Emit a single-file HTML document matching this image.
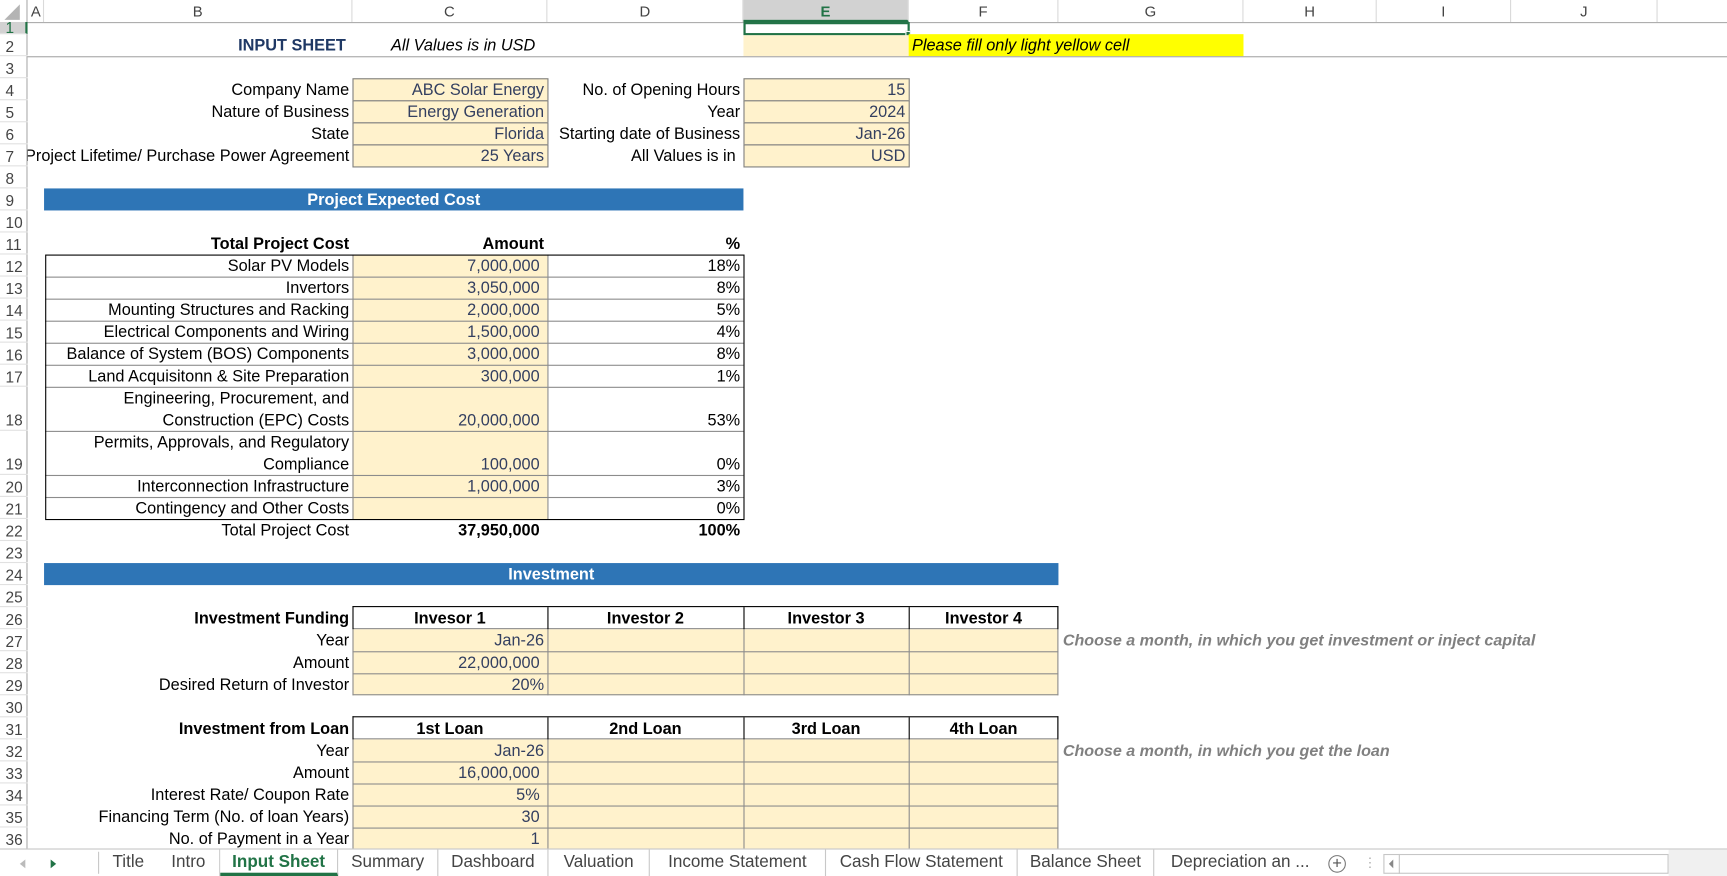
<!DOCTYPE html>
<html><head><meta charset="utf-8">
<style>
*{margin:0;padding:0;box-sizing:border-box}
html,body{width:1727px;height:876px;overflow:hidden;background:#fff}
#w{position:absolute;left:0;top:0;width:1568px;height:795px;transform:scale(1.1014,1.1019);transform-origin:0 0;font-family:"Liberation Sans",Arial,sans-serif;font-size:14.8px;color:#000}
.a{position:absolute;white-space:nowrap;line-height:23px;height:20px;overflow:visible}
.r{text-align:right;padding-right:3px}
.ctr{text-align:center}
.b{font-weight:bold}
.y{background:#FFF2CC;border:1px solid #7f7f7f;color:#333f60;line-height:21px}
.yn{background:#FFF2CC}
.v{color:#333f60}
.hl{position:absolute;height:1px;background:#8c8c8c}
.vl{position:absolute;width:1px;background:#8c8c8c}
.rh{position:absolute;left:0;width:25px;height:20px;line-height:22px;font-size:14px;color:#444;padding-left:5px;border-bottom:1px solid #e1e1e1}
.ch{position:absolute;top:0;height:20px;line-height:22px;text-align:center;font-size:13.5px;color:#444;border-right:1px solid #dadada}
.bar{position:absolute;background:#2E75B6;color:#fff;font-weight:bold;text-align:center;line-height:22px;height:20px}
.tab{position:absolute;top:771px;height:24px;line-height:24px;font-size:15.5px;color:#444;text-align:center;border-right:1px solid #c8c8c8}
.gi{color:#808080;font-style:italic;font-weight:bold}
</style></head><body><div id="w">

<div style="position:absolute;left:0;top:0;width:1568px;height:21px;border-bottom:1px solid #ababab;background:#fff"></div>
<div style="position:absolute;left:4px;top:4px;width:0;height:0;border-left:14px solid transparent;border-bottom:14px solid #b4b4b4"></div>
<div class="ch" style="left:0;width:25px;border-right:1px solid #ababab"></div>
<div class="ch" style="left:25px;width:15px;text-align:left;padding-left:3px">A</div>
<div class="ch" style="left:40px;width:280px">B</div>
<div class="ch" style="left:320px;width:177px">C</div>
<div class="ch" style="left:497px;width:178px">D</div>
<div class="ch" style="left:675px;width:150px;background:#d2d2d2;color:#217346;font-weight:bold;border-bottom:2px solid #217346">E</div>
<div class="ch" style="left:825px;width:136px">F</div>
<div class="ch" style="left:961px;width:168px">G</div>
<div class="ch" style="left:1129px;width:121px">H</div>
<div class="ch" style="left:1250px;width:122px">I</div>
<div class="ch" style="left:1372px;width:133px">J</div>

<div style="position:absolute;left:24px;top:20px;width:1px;height:751px;background:#ababab"></div>
<div class="rh" style="top:20px;height:11px;line-height:10px;overflow:hidden;background:#d2d2d2;color:#217346;border-right:2px solid #217346">1</div>
<div class="rh" style="top:31px">2</div><div class="rh" style="top:51px">3</div><div class="rh" style="top:71px">4</div><div class="rh" style="top:91px">5</div><div class="rh" style="top:111px">6</div><div class="rh" style="top:131px">7</div><div class="rh" style="top:151px">8</div><div class="rh" style="top:171px">9</div><div class="rh" style="top:191px">10</div><div class="rh" style="top:211px">11</div><div class="rh" style="top:231px">12</div><div class="rh" style="top:251px">13</div><div class="rh" style="top:271px">14</div><div class="rh" style="top:291px">15</div><div class="rh" style="top:311px">16</div><div class="rh" style="top:331px">17</div>
<div class="rh" style="top:351px;height:40px;line-height:60px">18</div><div class="rh" style="top:391px;height:40px;line-height:60px">19</div>
<div class="rh" style="top:431px">20</div><div class="rh" style="top:451px">21</div><div class="rh" style="top:471px">22</div><div class="rh" style="top:491px">23</div><div class="rh" style="top:511px">24</div><div class="rh" style="top:531px">25</div><div class="rh" style="top:551px">26</div><div class="rh" style="top:571px">27</div><div class="rh" style="top:591px">28</div><div class="rh" style="top:611px">29</div><div class="rh" style="top:631px">30</div><div class="rh" style="top:651px">31</div><div class="rh" style="top:671px">32</div><div class="rh" style="top:691px">33</div><div class="rh" style="top:711px">34</div><div class="rh" style="top:731px">35</div><div class="rh" style="top:751px">36</div>

<div style="position:absolute;left:675px;top:20px;width:151px;height:12px;border:2px solid #217346"></div>
<div style="position:absolute;left:822px;top:28px;width:5px;height:5px;background:#217346;border:1px solid #fff"></div>

<div class="a r b" style="left:40px;top:31px;width:277px;color:#1F3864">INPUT SHEET</div>
<div class="a" style="left:355px;top:31px;font-style:italic">All Values is in USD</div>
<div class="a yn" style="left:675px;top:32px;width:150px;height:19px"></div>
<div class="a" style="left:825px;top:31px;width:304px;background:#FFFF00;font-style:italic;padding-left:3px">Please fill only light yellow cell</div>
<div class="hl" style="left:25px;top:51px;width:1543px;background:#a6a6a6"></div>

<div class="a r" style="left:40px;top:71px;width:280px">Company Name</div>
<div class="a r" style="left:0;top:91px;width:320px">Nature of Business</div>
<div class="a r" style="left:0;top:111px;width:320px">State</div>
<div class="a r" style="left:25px;top:131px;width:295px;overflow:hidden;direction:rtl">Project Lifetime/ Purchase Power Agreement</div>
<div class="a r y" style="left:320px;top:71px;width:178px;height:21px">ABC Solar Energy</div>
<div class="a r y" style="left:320px;top:91px;width:178px;height:21px">Energy Generation</div>
<div class="a r y" style="left:320px;top:111px;width:178px;height:21px">Florida</div>
<div class="a r y" style="left:320px;top:131px;width:178px;height:21px">25 Years</div>
<div class="a r" style="left:497px;top:71px;width:178px">No. of Opening Hours</div>
<div class="a r" style="left:497px;top:91px;width:178px">Year</div>
<div class="a r" style="left:497px;top:111px;width:178px">Starting date of Business</div>
<div class="a r" style="left:497px;top:131px;width:178px;padding-right:7px">All Values is in</div>
<div class="a r y" style="left:675px;top:71px;width:151px;height:21px">15</div>
<div class="a r y" style="left:675px;top:91px;width:151px;height:21px">2024</div>
<div class="a r y" style="left:675px;top:111px;width:151px;height:21px">Jan-26</div>
<div class="a r y" style="left:675px;top:131px;width:151px;height:21px">USD</div>

<div class="bar" style="left:40px;top:171px;width:635px">Project Expected Cost</div>

<div class="a r b" style="left:40px;top:211px;width:280px">Total Project Cost</div>
<div class="a r b" style="left:320px;top:211px;width:177px">Amount</div>
<div class="a r b" style="left:497px;top:211px;width:178px">%</div>

<div class="a yn" style="left:320px;top:231px;width:177px;height:240px"></div>
<div class="hl" style="left:41px;top:251px;width:634px"></div>
<div class="hl" style="left:41px;top:271px;width:634px"></div>
<div class="hl" style="left:41px;top:291px;width:634px"></div>
<div class="hl" style="left:41px;top:311px;width:634px"></div>
<div class="hl" style="left:41px;top:331px;width:634px"></div>
<div class="hl" style="left:41px;top:351px;width:634px"></div>
<div class="hl" style="left:41px;top:391px;width:634px"></div>
<div class="hl" style="left:41px;top:431px;width:634px"></div>
<div class="hl" style="left:41px;top:451px;width:634px"></div>
<div class="vl" style="left:320px;top:231px;height:240px"></div>
<div class="vl" style="left:497px;top:231px;height:240px"></div>
<div style="position:absolute;left:41px;top:231px;width:635px;height:241px;border:1px solid #000"></div>

<div class="a r" style="left:40px;top:231px;width:280px">Solar PV Models</div>
<div class="a r" style="left:40px;top:251px;width:280px">Invertors</div>
<div class="a r" style="left:40px;top:271px;width:280px">Mounting Structures and Racking</div>
<div class="a r" style="left:40px;top:291px;width:280px">Electrical Components and Wiring</div>
<div class="a r" style="left:40px;top:311px;width:280px">Balance of System (BOS) Components</div>
<div class="a r" style="left:40px;top:331px;width:280px">Land Acquisitonn &amp; Site Preparation</div>
<div class="a r" style="left:40px;top:351px;width:280px">Engineering, Procurement, and</div>
<div class="a r" style="left:40px;top:371px;width:280px">Construction (EPC) Costs</div>
<div class="a r" style="left:40px;top:391px;width:280px">Permits, Approvals, and Regulatory</div>
<div class="a r" style="left:40px;top:411px;width:280px">Compliance</div>
<div class="a r" style="left:40px;top:431px;width:280px">Interconnection Infrastructure</div>
<div class="a r" style="left:40px;top:451px;width:280px">Contingency and Other Costs</div>

<div class="a r v" style="left:320px;top:231px;width:177px;padding-right:7px">7,000,000</div>
<div class="a r v" style="left:320px;top:251px;width:177px;padding-right:7px">3,050,000</div>
<div class="a r v" style="left:320px;top:271px;width:177px;padding-right:7px">2,000,000</div>
<div class="a r v" style="left:320px;top:291px;width:177px;padding-right:7px">1,500,000</div>
<div class="a r v" style="left:320px;top:311px;width:177px;padding-right:7px">3,000,000</div>
<div class="a r v" style="left:320px;top:331px;width:177px;padding-right:7px">300,000</div>
<div class="a r v" style="left:320px;top:371px;width:177px;padding-right:7px">20,000,000</div>
<div class="a r v" style="left:320px;top:411px;width:177px;padding-right:7px">100,000</div>
<div class="a r v" style="left:320px;top:431px;width:177px;padding-right:7px">1,000,000</div>

<div class="a r" style="left:497px;top:231px;width:178px">18%</div>
<div class="a r" style="left:497px;top:251px;width:178px">8%</div>
<div class="a r" style="left:497px;top:271px;width:178px">5%</div>
<div class="a r" style="left:497px;top:291px;width:178px">4%</div>
<div class="a r" style="left:497px;top:311px;width:178px">8%</div>
<div class="a r" style="left:497px;top:331px;width:178px">1%</div>
<div class="a r" style="left:497px;top:371px;width:178px">53%</div>
<div class="a r" style="left:497px;top:411px;width:178px">0%</div>
<div class="a r" style="left:497px;top:431px;width:178px">3%</div>
<div class="a r" style="left:497px;top:451px;width:178px">0%</div>

<div class="a r" style="left:40px;top:471px;width:280px">Total Project Cost</div>
<div class="a r b" style="left:320px;top:471px;width:177px;padding-right:7px">37,950,000</div>
<div class="a r b" style="left:497px;top:471px;width:178px">100%</div>

<div class="bar" style="left:40px;top:511px;width:921px">Investment</div>

<div class="a yn" style="left:320px;top:571px;width:641px;height:60px"></div>
<div class="hl" style="left:320px;top:591px;width:641px"></div>
<div class="hl" style="left:320px;top:611px;width:641px"></div>
<div class="hl" style="left:320px;top:630px;width:641px"></div>
<div class="hl" style="left:320px;top:570px;width:641px"></div>
<div class="vl" style="left:960px;top:551px;height:80px"></div>
<div class="vl" style="left:320px;top:571px;height:60px"></div>
<div class="vl" style="left:497px;top:571px;height:60px"></div>
<div class="vl" style="left:675px;top:571px;height:60px"></div>
<div class="vl" style="left:825px;top:571px;height:60px"></div>
<div style="position:absolute;left:320px;top:550px;width:641px;height:21px;border:1px solid #000;border-bottom:none"></div>
<div class="vl" style="left:497px;top:551px;height:20px;background:#000"></div>
<div class="vl" style="left:675px;top:551px;height:20px;background:#000"></div>
<div class="vl" style="left:825px;top:551px;height:20px;background:#000"></div>

<div class="a r b" style="left:40px;top:551px;width:280px">Investment Funding</div>
<div class="a ctr b" style="left:320px;top:551px;width:177px">Invesor 1</div>
<div class="a ctr b" style="left:497px;top:551px;width:178px">Investor 2</div>
<div class="a ctr b" style="left:675px;top:551px;width:150px">Investor 3</div>
<div class="a ctr b" style="left:825px;top:551px;width:136px">Investor 4</div>
<div class="a r" style="left:40px;top:571px;width:280px">Year</div>
<div class="a r" style="left:40px;top:591px;width:280px">Amount</div>
<div class="a r" style="left:40px;top:611px;width:280px">Desired Return of Investor</div>
<div class="a r v" style="left:320px;top:571px;width:177px">Jan-26</div>
<div class="a r v" style="left:320px;top:591px;width:177px;padding-right:7px">22,000,000</div>
<div class="a r v" style="left:320px;top:611px;width:177px">20%</div>
<div class="a gi" style="left:965px;top:571px;font-size:14.6px">Choose a month, in which you get investment or inject capital</div>

<div class="a yn" style="left:320px;top:671px;width:641px;height:100px"></div>
<div class="hl" style="left:320px;top:670px;width:641px"></div>
<div class="hl" style="left:320px;top:691px;width:641px"></div>
<div class="hl" style="left:320px;top:711px;width:641px"></div>
<div class="hl" style="left:320px;top:731px;width:641px"></div>
<div class="hl" style="left:320px;top:751px;width:641px"></div>
<div class="vl" style="left:960px;top:651px;height:120px"></div>
<div class="vl" style="left:320px;top:671px;height:100px"></div>
<div class="vl" style="left:497px;top:671px;height:100px"></div>
<div class="vl" style="left:675px;top:671px;height:100px"></div>
<div class="vl" style="left:825px;top:671px;height:100px"></div>
<div style="position:absolute;left:320px;top:650px;width:641px;height:21px;border:1px solid #000;border-bottom:none"></div>
<div class="vl" style="left:497px;top:651px;height:20px;background:#000"></div>
<div class="vl" style="left:675px;top:651px;height:20px;background:#000"></div>
<div class="vl" style="left:825px;top:651px;height:20px;background:#000"></div>

<div class="a r b" style="left:40px;top:651px;width:280px">Investment from Loan</div>
<div class="a ctr b" style="left:320px;top:651px;width:177px">1st Loan</div>
<div class="a ctr b" style="left:497px;top:651px;width:178px">2nd Loan</div>
<div class="a ctr b" style="left:675px;top:651px;width:150px">3rd Loan</div>
<div class="a ctr b" style="left:825px;top:651px;width:136px">4th Loan</div>
<div class="a r" style="left:40px;top:671px;width:280px">Year</div>
<div class="a r" style="left:40px;top:691px;width:280px">Amount</div>
<div class="a r" style="left:40px;top:711px;width:280px">Interest Rate/ Coupon Rate</div>
<div class="a r" style="left:40px;top:731px;width:280px">Financing Term (No. of loan Years)</div>
<div class="a r" style="left:40px;top:751px;width:280px">No. of Payment in a Year</div>
<div class="a r v" style="left:320px;top:671px;width:177px">Jan-26</div>
<div class="a r v" style="left:320px;top:691px;width:177px;padding-right:7px">16,000,000</div>
<div class="a r v" style="left:320px;top:711px;width:177px;padding-right:7px">5%</div>
<div class="a r v" style="left:320px;top:731px;width:177px;padding-right:7px">30</div>
<div class="a r v" style="left:320px;top:751px;width:177px;padding-right:7px">1</div>
<div class="a gi" style="left:965px;top:671px;font-size:14.6px">Choose a month, in which you get the loan</div>

<div style="position:absolute;left:0;top:770px;width:1568px;height:25px;background:#fff;border-top:1px solid #c6c6c6"></div>
<div style="position:absolute;left:18px;top:780px;width:0;height:0;border-top:4px solid transparent;border-bottom:4px solid transparent;border-right:5px solid #bbb"></div>
<div style="position:absolute;left:46px;top:780px;width:0;height:0;border-top:4px solid transparent;border-bottom:4px solid transparent;border-left:5px solid #217346"></div>
<div style="position:absolute;left:89px;top:773px;width:1px;height:20px;background:#c8c8c8"></div>
<div class="tab" style="left:90px;width:53px;border-right:none">Title</div>
<div class="tab" style="left:143px;width:57px">Intro</div>
<div class="tab" style="left:200px;width:107px;background:#fff;color:#217346;font-weight:bold;border-bottom:3px solid #217346;border-right:1px solid #c8c8c8">Input Sheet</div>
<div class="tab" style="left:307px;width:91px">Summary</div>
<div class="tab" style="left:398px;width:100px">Dashboard</div>
<div class="tab" style="left:498px;width:92px">Valuation</div>
<div class="tab" style="left:590px;width:160px">Income Statement</div>
<div class="tab" style="left:750px;width:174px">Cash Flow Statement</div>
<div class="tab" style="left:924px;width:124px">Balance Sheet</div>
<div class="tab" style="left:1048px;width:156px;border-right:none">Depreciation an ...</div>
<div style="position:absolute;left:1206px;top:776px;width:16px;height:16px;border:1px solid #777;border-radius:50%;text-align:center;line-height:13px;font-size:15px;color:#555">+</div>
<div style="position:absolute;left:1238px;top:773px;color:#aaa;font-size:12px;line-height:20px">⋮</div>
<div style="position:absolute;left:1256px;top:775px;width:259px;height:18px;border:1px solid #c6c6c6;background:#fff"></div>
<div style="position:absolute;left:1256px;top:775px;width:15px;height:18px;border-right:1px solid #c6c6c6"></div>
<div style="position:absolute;left:1261px;top:780px;width:0;height:0;border-top:4px solid transparent;border-bottom:4px solid transparent;border-right:4px solid #888"></div>
<div style="position:absolute;left:1515px;top:771px;width:53px;height:24px;background:#f0f0f0"></div>

</div></body></html>
